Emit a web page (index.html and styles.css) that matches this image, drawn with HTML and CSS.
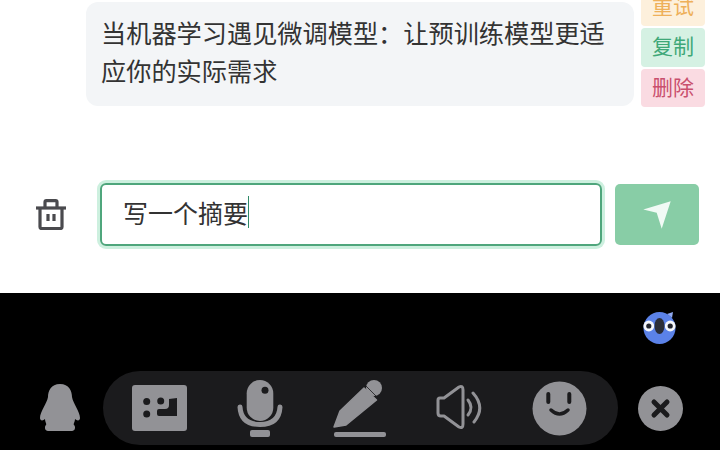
FILE: index.html
```html
<!DOCTYPE html>
<html lang="zh-CN">
<head>
  <meta charset="UTF-8">
  <meta name="viewport" content="width=device-width, initial-scale=1.0">
  <title>chat</title>
  <link rel="stylesheet" href="styles.css">
</head>
<body>
  <div class="chat">
    <div class="message-row">
      <div class="bubble">当机器学习遇见微调模型：让预训练模型更适应你的实际需求</div>
      <div class="actions">
        <div class="action retry">重试</div>
        <div class="action copy">复制</div>
        <div class="action remove">删除</div>
      </div>
    </div>
    <div class="composer">
      <svg class="trash" width="30" height="31" viewBox="0 0 30 31" fill="none" stroke="#4a4a4e" stroke-width="3.2">
        <path d="M0 9H30"/>
        <path d="M9 9V3Q9 1.6 10.4 1.6H19.6Q21 1.6 21 3V9"/>
        <path d="M4 9V28Q4 29.5 5.5 29.5H24.5Q26 29.5 26 28V9"/>
        <path d="M12 15V22M18 15V22"/>
      </svg>
      <div class="input"><span class="typed">写一个摘要</span></div>
      <div class="send">
        <svg width="28" height="28" viewBox="0 0 28 28"><polygon points="27.7,0.2 0.3,8.5 13.7,11.8 18.7,27.8" fill="#f1faf5"/></svg>
      </div>
    </div>
  </div>

  <div class="keyboard-area">
    <div class="float-row">
      <svg width="34" height="34" viewBox="0 0 34 34">
        <path d="M24 3L30 1L29 7Z" fill="#8fa8f0"/>
        <circle cx="16.5" cy="17" r="16" fill="#5b82e8"/>
        <circle cx="5.8" cy="15" r="5.4" fill="#f4f6fb"/>
        <circle cx="27.2" cy="15" r="5.4" fill="#f4f6fb"/>
        <circle cx="5.8" cy="15" r="2.6" fill="#23252e"/>
        <circle cx="27.2" cy="15" r="2.6" fill="#23252e"/>
        <ellipse cx="16.5" cy="15" rx="5" ry="8" fill="#2a2d38"/>
      </svg>
    </div>
    <div class="dock">
      <svg class="penguin" width="40" height="48" viewBox="0 0 40 48">
        <path class="gray" d="M20 0C29 0 32 7 32 13C33 19 40 28 40 34C40 37 37 37 35 35C35 38 33 40 34 41C36 43 35 47 32 47H8C5 47 4 43 6 41C7 40 5 38 5 35C3 37 0 37 0 34C0 28 7 19 8 13C8 7 11 0 20 0Z"/>
      </svg>
      <div class="pill">
        <svg width="55" height="46" viewBox="0 0 55 46">
          <rect class="gray" width="55" height="46" rx="3"/>
          <circle class="dark" cx="14.7" cy="16.5" r="3.5"/>
          <circle class="dark" cx="28.7" cy="16" r="3.5"/>
          <circle class="dark" cx="14.7" cy="29" r="3.5"/>
          <path class="dark" d="M37 14L45 13V31H27Q25 31 25 29V26Q25 24 27 24H33Q37 24 37 20Z"/>
        </svg>
        <svg width="48" height="57" viewBox="0 0 48 57">
          <rect class="gray" x="10.7" y="0" width="26.6" height="41" rx="13.3"/>
          <circle class="dark" cx="29" cy="10.3" r="3.5"/>
          <path class="line" d="M4 27Q5 44.500 24 44.500Q43 44.500 44 27" stroke-width="5"/>
          <rect class="gray" x="14" y="50" width="20" height="7" rx="2"/>
        </svg>
        <svg width="53" height="57" viewBox="0 0 53 57">
          <path class="gray" d="M1 47L7 31L31 8L43.500 20L13 45Z" stroke="#929296" stroke-linejoin="round" stroke-width="1.500"/>
          <circle class="gray" cx="41" cy="8" r="8"/>
          <path d="M30 3L47 20" stroke="#1b1b1d" stroke-width="0.800"/>
          <rect class="gray" x="1" y="52" width="52" height="5" rx="2"/>
        </svg>
        <svg width="48" height="48" viewBox="0 0 48 48" fill="none">
          <path class="line" d="M3 16Q3 14 5 14H9L24 3Q28 1 28 6V40Q28 45 24 43L9 32H6Q3 32 3 29Z" stroke-width="3"/>
          <path class="line" d="M33 16Q39 23.500 33 31" stroke-width="3"/>
          <path class="line" d="M38 9Q51 23.500 39 38" stroke-width="3"/>
        </svg>
        <svg width="55" height="55" viewBox="0 0 55 55">
          <circle class="gray" cx="27.500" cy="27.500" r="27"/>
          <path class="face" d="M16.300 13V21M37.300 13V21" stroke-width="4"/>
          <path class="face" d="M19 29Q27.500 37 36 29" stroke-width="3.500"/>
        </svg>
      </div>
      <svg class="close" width="45" height="45" viewBox="0 0 45 45">
        <circle class="gray" cx="22.500" cy="22.500" r="22.500"/>
        <path class="face" d="M16 16L29 29M29 16L16 29" stroke-width="5"/>
      </svg>
    </div>
  </div>
</body>
</html>
```

FILE: styles.css
```css
body{
  margin: 0;
  width: 720px;
  height: 450px;
  overflow: hidden;
  background-color: black;
  font-family: "Noto Sans CJK SC", "Liberation Sans", sans-serif;
}
.chat{
  height: 293px;
  background-color: white;
  overflow: hidden;
}
.message-row{
  display: flex;
  align-items: flex-start;
  gap: 7px;
  padding-left: 86px;
}
.bubble{
  box-sizing: border-box;
  width: 548px;
  height: 104px;
  margin-top: 2px;
  padding: 11px 15px;
  background-color: #f3f5f7;
  border-radius: 12px;
  font-size: 25.2px;
  line-height: 38px;
  color: #333;
}
.actions{
  display: flex;
  flex-direction: column;
  gap: 2px;
  width: 64px;
  margin-top: -12.5px;
}
.action{
  height: 38.5px;
  line-height: 35px;
  border-radius: 4px;
  text-align: center;
  font-size: 21px;
}
.retry{
  background-color: #fdf0dc;
  color: #eeb05a;
}
.copy{
  background-color: #d5f1e3;
  color: #3fa878;
}
.remove{
  background-color: #fadbe2;
  color: #c94f6d;
}
.composer{
  display: flex;
  align-items: center;
  margin-top: 76px;
  padding-left: 36px;
}
.trash{
  flex: none;
  margin-right: 34px;
}
.input{
  box-sizing: border-box;
  width: 502px;
  height: 63px;
  padding-left: 21px;
  border: 2px solid #4fa67c;
  border-radius: 6px;
  box-shadow: 0 0 0 3px #cdf0df;
  font-size: 25px;
  line-height: 55px;
  color: #333;
}
.typed{
  display: inline-block;
  height: 32px;
  line-height: 32px;
  border-right: 1px solid #2f8a68;
}
.send{
  display: flex;
  align-items: center;
  justify-content: center;
  width: 84px;
  height: 61px;
  margin-left: 13px;
  background-color: #88cda6;
  border-radius: 5px;
}
.keyboard-area{
  height: 157px;
}
.float-row{
  display: flex;
  justify-content: flex-end;
  box-sizing: border-box;
  height: 78px;
  padding: 18px 43px 0 0;
}
.dock{
  display: flex;
  align-items: center;
  padding-left: 40px;
}
.penguin{
  flex: none;
  margin-right: 23px;
}
.pill{
  display: flex;
  align-items: center;
  gap: 49px;
  box-sizing: border-box;
  width: 515px;
  height: 74px;
  padding-left: 29px;
  background-color: #1b1b1d;
  border-radius: 37px;
}
.close{
  flex: none;
  margin-left: 20px;
}
.gray{
  fill: #929296;
}
.dark{
  fill: #1b1b1d;
}
.line{
  fill: none;
  stroke: #929296;
  stroke-linecap: round;
  stroke-linejoin: round;
}
.face{
  fill: none;
  stroke: #1b1b1d;
  stroke-linecap: round;
}
```
